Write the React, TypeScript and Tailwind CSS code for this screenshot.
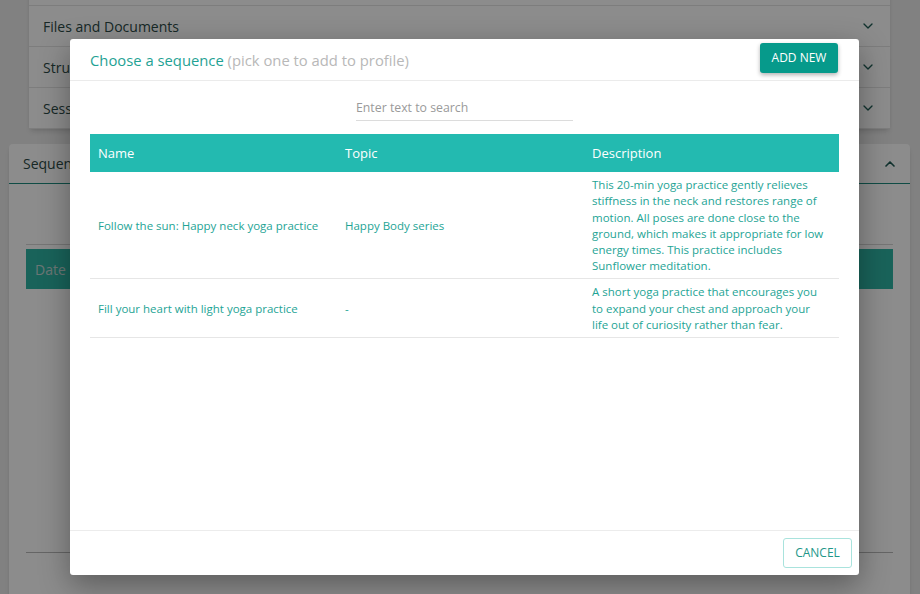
import { ChevronDown, ChevronUp } from "lucide-react";

const sections = ["Overview", "Files and Documents", "Structure", "Sessions"];

const sequences = [
  {
    name: "Follow the sun: Happy neck yoga practice",
    topic: "Happy Body series",
    description:
      "This 20-min yoga practice gently relieves stiffness in the neck and restores range of motion. All poses are done close to the ground, which makes it appropriate for low energy times. This practice includes Sunflower meditation.",
  },
  {
    name: "Fill your heart with light yoga practice",
    topic: "-",
    description:
      "A short yoga practice that encourages you to expand your chest and approach your life out of curiosity rather than fear.",
  },
];

const App = () => {
  return (
    <div
      className="relative w-[920px] h-[594px] overflow-hidden bg-[#ececec]"
      style={{ fontFamily: '"Open Sans", "Noto Sans", sans-serif' }}
    >
      {/* Page behind the dialog */}
      <div className="flex flex-col">
        <div className="ml-[29px] w-[861px] mt-[-35px] bg-white shadow-md">
          {sections.map((s) => (
            <div
              key={s}
              className="flex items-center justify-between h-[41px] px-[14px] border-b border-[#e3e3e3] text-[14px] text-[#2c4a46]"
            >
              <span>{s}</span>
              <ChevronDown className="w-4 h-4 text-[#1f5c55]" strokeWidth={2} />
            </div>
          ))}
        </div>

        <div className="ml-[9px] w-[901px] mt-[15px] h-[460px] bg-white rounded-t shadow-md">
          <div className="flex items-center justify-between h-[40px] pl-[14px] pr-[12px] border-b border-[#1d8a7f] text-[14px] text-[#2c4a46]">
            <span>Sequences</span>
            <ChevronUp className="w-4 h-4 text-[#1f5c55]" strokeWidth={2.5} />
          </div>
          <div className="mx-[17px] mt-[60px] border-t border-[#d6d6d6]" />
          <div className="mx-[17px] mt-[4px] h-[40px] flex items-center pl-[9px] bg-[#2fb5a5] text-[14px] text-[#c4d8d5]">
            Date
          </div>
          <div className="mx-[17px] mt-[263px] border-t border-[#b9b9b9]" />
        </div>
      </div>

      {/* Overlay */}
      <div className="absolute inset-0 bg-black/[0.45]" />

      {/* Dialog */}
      <div className="absolute left-[70px] top-[39px] w-[789px] h-[536px] bg-white rounded-[3px] shadow-[0_10px_30px_rgba(0,0,0,0.35)] flex flex-col">
        <div className="flex items-center justify-between h-[42px] pl-[20px] pr-[21px] border-b border-[#ebebeb]">
          <h2 className="text-[14.8px] text-[#1fa294] pt-[1px]">
            Choose a sequence <span className="text-[#b8b8b8]">(pick one to add to profile)</span>
          </h2>
          <button className="h-[30px] w-[78px] mt-[-3px] rounded-[3px] bg-[#069a8b] text-white text-[12px] uppercase shadow-[0_2px_4px_rgba(0,0,0,0.3)]">
            Add new
          </button>
        </div>

        <div className="flex-1 px-[20px] flex flex-col">
          <div className="flex justify-center mt-[17px]">
            <input
              placeholder="Enter text to search"
              className="w-[217px] h-[23px] pb-[3px] text-[12.3px] text-[#555] placeholder:text-[#9a9a9a] border-b border-[#dcdcdc] outline-none"
            />
          </div>

          <table className="mt-[13px] w-full table-fixed border-collapse">
            <thead>
              <tr className="bg-[#23bab0] text-white text-[13px] text-left h-[38px]">
                <th className="font-normal pl-[8px] pt-[2px] w-[247px]">Name</th>
                <th className="font-normal pl-[8px] pt-[2px] w-[247px]">Topic</th>
                <th className="font-normal pl-[8px] pt-[2px]">Description</th>
              </tr>
            </thead>
            <tbody>
              {sequences.map((row) => (
                <tr
                  key={row.name}
                  className="border-b border-[#e6e6e6] text-[11.5px] leading-[16.3px] text-[#1ea495]"
                >
                  <td className="pl-[8px] pt-[5px] pb-[3.5px] align-middle">{row.name}</td>
                  <td className="pl-[8px] pt-[5px] pb-[3.5px] align-middle">{row.topic}</td>
                  <td className="pl-[8px] pr-[10px] pt-[5px] pb-[3.5px] align-middle">{row.description}</td>
                </tr>
              ))}
            </tbody>
          </table>
        </div>

        <div className="h-[45px] border-t border-[#ececec] flex items-center justify-end pr-[7px]">
          <button className="h-[30px] w-[69px] rounded-[3px] border border-[#a9e3dd] text-[12px] text-[#229789] uppercase">
            Cancel
          </button>
        </div>
      </div>
    </div>
  );
};

export default App;
